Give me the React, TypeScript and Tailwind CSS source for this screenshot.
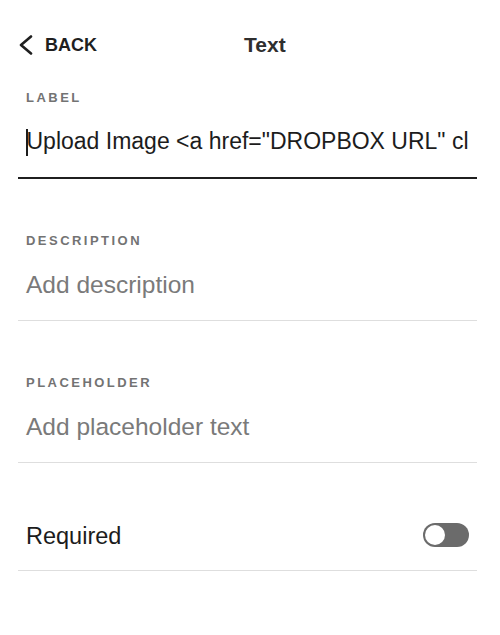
import React from "react";

const font = { fontFamily: '"Liberation Sans", Arial, sans-serif' };

function FieldLabel({ children }: { children: React.ReactNode }) {
  return (
    <div className="h-[16px] px-2 text-[13px] leading-[16px] font-bold tracking-[0.19em] text-[#737373]">
      {children}
    </div>
  );
}

function Section({
  label,
  placeholder,
}: {
  label: string;
  placeholder: string;
}) {
  return (
    <div className="pt-[54px]">
      <FieldLabel>{label}</FieldLabel>
      <div className="mt-[21px] h-[30px] px-2 text-[24.5px] leading-[30px] text-[#7a7a7a] whitespace-nowrap">
        {placeholder}
      </div>
      <div className="mt-[20px] h-px bg-[#dedede]" />
    </div>
  );
}

export default function App() {
  return (
    <div className="w-[500px] h-[635px] bg-white" style={font}>
      <div className="pl-[18px] pr-[23px]">
        {/* header */}
        <div className="flex items-center h-[30px] mt-[30px]">
          <button className="flex items-center gap-[11px] text-[#1f1f1f]">
            <svg width="16" height="20" viewBox="0 0 16 20" fill="none">
              <path
                d="M13 1.5 L3 10 L13 18.5"
                stroke="#1f1f1f"
                strokeWidth="2.6"
                strokeLinecap="round"
                strokeLinejoin="round"
              />
            </svg>
            <span className="text-[18px] leading-[30px] font-bold">BACK</span>
          </button>
          <div className="ml-[147px] text-[21px] leading-[30px] font-bold text-[#2e2e2e]">
            Text
          </div>
        </div>

        {/* label */}
        <div className="pt-[30px]">
          <FieldLabel>LABEL</FieldLabel>
          <div className="mt-[20px] h-[30px] px-2">
            <div className="overflow-hidden whitespace-nowrap text-[23px] leading-[30px] text-[#1c1c1c]">
              <span className="inline-block w-[1.5px] h-[27px] bg-[#1c1c1c] align-middle -mr-[1px]" />
              Upload Image &lt;a href="DROPBOX URL" class="sqs-block-button-element"
            </div>
          </div>
          <div className="mt-[21px] h-[2px] bg-[#1f1f1f]" />
        </div>

        <Section label="DESCRIPTION" placeholder="Add description" />
        <Section label="PLACEHOLDER" placeholder="Add placeholder text" />

        {/* required */}
        <div className="pt-[58px] pb-[22px] px-2 flex items-center justify-between">
          <span className="text-[23.5px] leading-[24px] pt-[3px] text-[#1c1c1c]">Required</span>
          <div className="w-[46px] h-[24px] rounded-full bg-[#6b6b6b] p-[2px] flex items-center">
            <div className="w-[20px] h-[20px] rounded-full bg-white" />
          </div>
        </div>
        <div className="h-px bg-[#dedede]" />
      </div>
    </div>
  );
}
